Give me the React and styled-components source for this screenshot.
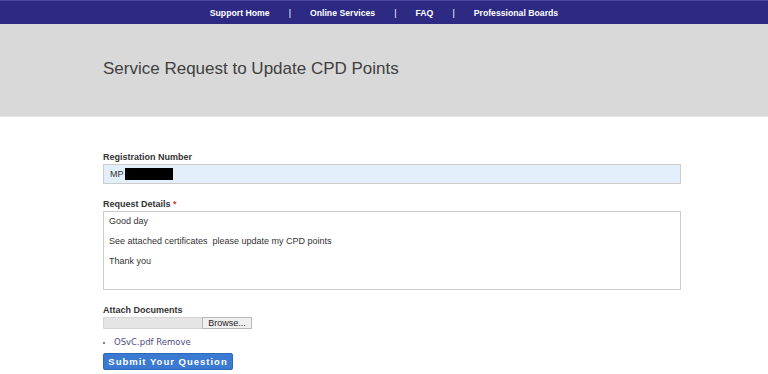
import React from 'react';
import styled, { createGlobalStyle } from 'styled-components';

const GlobalStyle = createGlobalStyle`
  html, body {
    margin: 0;
    padding: 0;
    background: #ffffff;
    font-family: 'Liberation Sans', Arial, sans-serif;
  }
`;

const NavBar = styled.nav`
  height: 24px;
  background: #2d2a84;
  border-top: 1px solid #4a47a0;
  box-sizing: border-box;
  display: flex;
  align-items: center;
  justify-content: center;
`;

const NavLink = styled.a`
  color: #ffffff;
  font-size: 8.7px;
  font-weight: bold;
  text-decoration: none;
`;

const NavSep = styled.span`
  color: #ffffff;
  font-size: 9px;
  margin: 0 19px;
`;

const Banner = styled.header`
  height: 92px;
  background: #d9d9d9;
  border-bottom: 1px solid #e6e6e6;
  display: flex;
  align-items: center;
  padding-left: 103px;
`;

const Title = styled.h1`
  margin: 0;
  font-size: 17px;
  font-weight: normal;
  color: #3f3f3f;
  padding-bottom: 2px;
`;

const Form = styled.form`
  width: 578px;
  margin: 0 0 0 103px;
  padding-top: 35px;
`;

const Field = styled.div`
  margin-bottom: ${(p) => p.gap ?? 15}px;
`;

const Label = styled.label`
  display: block;
  font-size: 9px;
  font-weight: bold;
  color: #333333;
  margin-bottom: 2px;
`;

const Required = styled.span`
  color: #d33c3c;
`;

const TextInput = styled.div`
  height: 20px;
  box-sizing: border-box;
  background: #e3effa;
  border: 1px solid #cccccc;
  display: flex;
  align-items: center;
  padding-left: 6px;
  font-size: 9px;
  color: #333;
`;

const Redacted = styled.span`
  display: inline-block;
  width: 48px;
  height: 12px;
  background: #000;
  margin-left: 1px;
`;

const TextArea = styled.div`
  height: 79px;
  box-sizing: border-box;
  border: 1px solid #cccccc;
  padding: 4px 5px;
  font-size: 9px;
  color: #333;
  display: flex;
  flex-direction: column;
  gap: 10px;
`;

const FileRow = styled.div`
  display: flex;
  height: 12px;
`;

const FileBox = styled.div`
  width: 98px;
  background: #e5e5e5;
  border: 1px solid #d5d5d5;
  border-right: none;
`;

const BrowseButton = styled.div`
  width: 50px;
  box-sizing: border-box;
  background: #efefef;
  border: 1px solid #b8b8b8;
  font-size: 9px;
  color: #222;
  display: flex;
  align-items: center;
  justify-content: center;
`;

const FileList = styled.ul`
  margin: 8px 0 4px 0;
  padding: 0 0 0 11px;
  font-family: 'DejaVu Sans', Verdana, sans-serif;
  font-size: 8.5px;
  color: #4d4d7a;
  li::marker { color: #555; font-size: 7px; }
`;

const FileLink = styled.a`
  color: #4d4d85;
  text-decoration: none;
`;

const SubmitButton = styled.button`
  width: 130px;
  height: 17px;
  background: #3a7ad2;
  border: 1px solid #2e68b8;
  border-radius: 2px;
  color: #ffffff;
  font-family: 'Liberation Sans', Arial, sans-serif;
  font-size: 9.5px;
  font-weight: bold;
  letter-spacing: 1px;
  white-space: nowrap;
  padding: 0;
  cursor: pointer;
`;

const navItems = ['Support Home', 'Online Services', 'FAQ', 'Professional Boards'];

export default function App() {
  return (
    <>
      <GlobalStyle />
      <NavBar>
        {navItems.map((item, i) => (
          <React.Fragment key={item}>
            {i > 0 && <NavSep>|</NavSep>}
            <NavLink href="#">{item}</NavLink>
          </React.Fragment>
        ))}
      </NavBar>
      <Banner>
        <Title>Service Request to Update CPD Points</Title>
      </Banner>
      <Form onSubmit={(e) => e.preventDefault()}>
        <Field>
          <Label>Registration Number</Label>
          <TextInput>
            MP<Redacted />
          </TextInput>
        </Field>
        <Field>
          <Label>
            Request Details <Required>*</Required>
          </Label>
          <TextArea>
            <div>Good day</div>
            <div>See attached certificates &nbsp;please update my CPD points</div>
            <div>Thank you</div>
          </TextArea>
        </Field>
        <Field gap={0}>
          <Label>Attach Documents</Label>
          <FileRow>
            <FileBox />
            <BrowseButton>Browse...</BrowseButton>
          </FileRow>
          <FileList>
            <li>
              <FileLink href="#">OSvC.pdf</FileLink> <FileLink href="#">Remove</FileLink>
            </li>
          </FileList>
        </Field>
        <SubmitButton type="submit">Submit Your Question</SubmitButton>
      </Form>
    </>
  );
}
